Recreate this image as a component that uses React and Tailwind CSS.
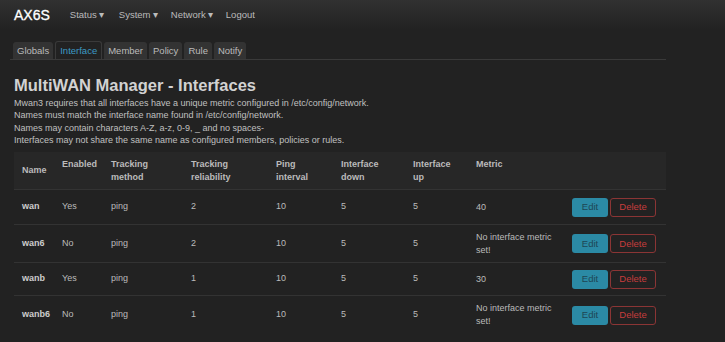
const tabs = ['Globals', 'Interface', 'Member', 'Policy', 'Rule', 'Notify']

const rows = [
  { name: 'wan', enabled: 'Yes', method: 'ping', rel: '2', ping: '10', down: '5', up: '5', metric: '40', h: 'h-[35px]' },
  { name: 'wan6', enabled: 'No', method: 'ping', rel: '2', ping: '10', down: '5', up: '5', metric: 'No interface metric set!', h: 'h-[38px]' },
  { name: 'wanb', enabled: 'Yes', method: 'ping', rel: '1', ping: '10', down: '5', up: '5', metric: '30', h: 'h-[33px]' },
  { name: 'wanb6', enabled: 'No', method: 'ping', rel: '1', ping: '10', down: '5', up: '5', metric: 'No interface metric set!', h: 'h-[38px]' },
]

const cols = 'grid grid-cols-[40px_49px_80px_85px_65px_72px_63px_96px_1fr] items-center'

export default function App() {
  return (
    <div className="h-[342px] w-[725px] overflow-hidden bg-[#222] font-['Liberation_Sans',Arial,sans-serif] text-[#bbb]">
      {/* ---- Navbar ---- */}
      <div className="flex h-[30px] items-center bg-gradient-to-b from-[#313131] to-[#222] px-[14px]">
        <span className="mr-[20px] text-[14px] leading-none text-white [-webkit-text-stroke:0.3px_white]">AX6S</span>
        <div className="flex text-[9.5px] text-[#bbb]">
          <span className="w-[49px]">Status ▾</span>
          <span className="w-[52px]">System ▾</span>
          <span className="w-[55px]">Network ▾</span>
          <span>Logout</span>
        </div>
      </div>

      <div className="w-[666px] pl-[10px]">
        {/* ---- Tabs ---- */}
        <div className="mt-[11px] flex items-end gap-[2px] border-b border-[#3a3a3a] pl-[3px]">
          {tabs.map((t) => (
            <div
              key={t}
              className={`rounded-t-[3px] px-[4px] pb-[3px] pt-[3px] text-[9.5px] leading-[11px] ${
                t === 'Interface'
                  ? 'border border-b-0 border-[#3a3a3a] bg-[#222] text-[#3c9ac4]'
                  : 'bg-[#333] text-[#bbb]'
              }`}
            >
              {t}
            </div>
          ))}
        </div>

        {/* ---- Heading ---- */}
        <div className="pl-[4px]">
          <h1 className="mt-[15px] text-[16.5px] font-bold leading-[20px] text-[#d2d2d2]">
            MultiWAN Manager - Interfaces
          </h1>
          <div className="mt-[2px] text-[9px] leading-[12.3px] text-[#c0c0c0]">
            <p>Mwan3 requires that all interfaces have a unique metric configured in /etc/config/network.</p>
            <p>Names must match the interface name found in /etc/config/network.</p>
            <p>Names may contain characters A-Z, a-z, 0-9, _ and no spaces-</p>
            <p>Interfaces may not share the same name as configured members, policies or rules.</p>
          </div>

          {/* ---- Table ---- */}
          <div className="mt-[6px] text-[9px]">
            <div className={`${cols} h-[38px] border-b border-[#333] bg-[#272727] pl-[8px] font-bold leading-[13px] text-[#bbb]`}>
              <span className="self-center">Name</span>
              <span className="self-start pt-[6px]">Enabled</span>
              <span className="self-start pt-[6px]">Tracking<br />method</span>
              <span className="self-start pt-[6px]">Tracking<br />reliability</span>
              <span className="self-start pt-[6px]">Ping<br />interval</span>
              <span className="self-start pt-[6px]">Interface<br />down</span>
              <span className="self-start pt-[6px]">Interface<br />up</span>
              <span className="self-start pt-[6px]">Metric</span>
              <span />
            </div>
            {rows.map((r, i) => (
              <div
                key={r.name}
                className={`${cols} ${r.h} pl-[8px] ${i < rows.length - 1 ? 'border-b border-[#333]' : ''}`}
              >
                <span className="font-bold text-[#ccc]">{r.name}</span>
                <span>{r.enabled}</span>
                <span>{r.method}</span>
                <span>{r.rel}</span>
                <span>{r.ping}</span>
                <span>{r.down}</span>
                <span>{r.up}</span>
                <span className="pr-[8px] leading-[13px]">{r.metric}</span>
                <div className="flex gap-[2px]">
                  <button className="h-[19px] w-[36px] rounded-[3px] bg-[#2b8aa5] text-[9.5px] text-[#1e4654]">
                    Edit
                  </button>
                  <button className="h-[19px] w-[46px] rounded-[3px] border border-[#8b3535] text-[9.5px] text-[#c63d3d]">
                    Delete
                  </button>
                </div>
              </div>
            ))}
          </div>
        </div>
      </div>
    </div>
  )
}
